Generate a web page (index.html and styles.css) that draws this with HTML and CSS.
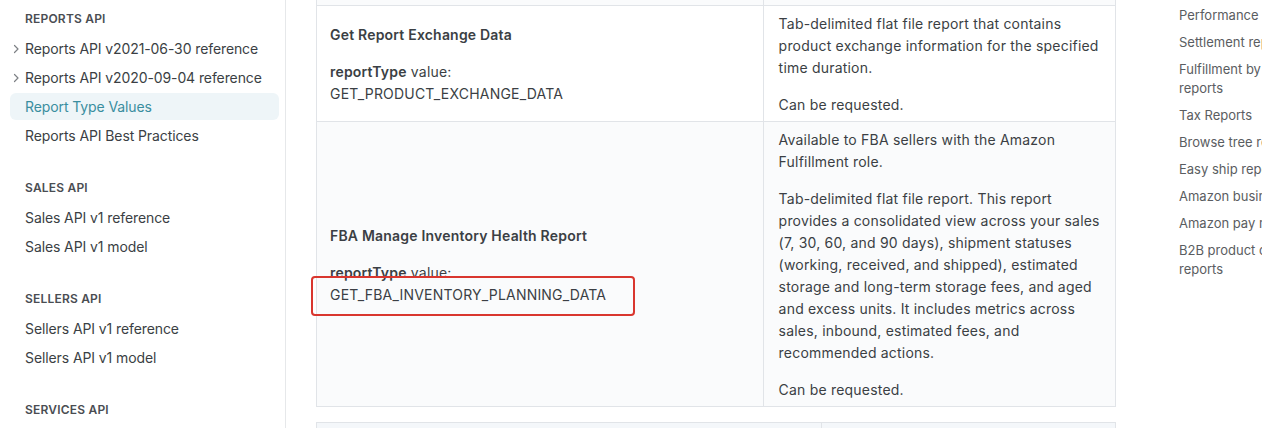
FILE: index.html
```html
<!DOCTYPE html>
<html lang="en">
<head>
<meta charset="utf-8">
<title>Report Type Values</title>
<link rel="stylesheet" href="styles.css">
</head>
<body>
<div class="page">
  <nav class="sidebar">
    <div class="section">
      <div class="section-title">REPORTS API</div>
      <a class="nav-item"><svg class="chev" viewBox="0 0 8 10" width="8" height="10"><path d="M2.5 1.5 L6 5 L2.5 8.5" fill="none" stroke="#7d8085" stroke-width="1.2" stroke-linecap="round" stroke-linejoin="round"/></svg>Reports API v2021-06-30 reference</a>
      <a class="nav-item"><svg class="chev" viewBox="0 0 8 10" width="8" height="10"><path d="M2.5 1.5 L6 5 L2.5 8.5" fill="none" stroke="#7d8085" stroke-width="1.2" stroke-linecap="round" stroke-linejoin="round"/></svg>Reports API v2020-09-04 reference</a>
      <a class="nav-item active">Report Type Values</a>
      <a class="nav-item">Reports API Best Practices</a>
    </div>
    <div class="section">
      <div class="section-title">SALES API</div>
      <a class="nav-item">Sales API v1 reference</a>
      <a class="nav-item">Sales API v1 model</a>
    </div>
    <div class="section">
      <div class="section-title">SELLERS API</div>
      <a class="nav-item">Sellers API v1 reference</a>
      <a class="nav-item">Sellers API v1 model</a>
    </div>
    <div class="section">
      <div class="section-title">SERVICES API</div>
    </div>
  </nav>

  <main class="content">
    <table class="report-table">
      <colgroup><col class="col-name"><col class="col-desc"></colgroup>
      <tr class="row-prev"><td></td><td></td></tr>
      <tr class="row-white">
        <td class="name-cell">
          <p><strong>Get Report Exchange Data</strong></p>
          <p><strong>reportType</strong> value:<br>GET_PRODUCT_EXCHANGE_DATA</p>
        </td>
        <td class="desc-cell">
          <p>Tab-delimited flat file report that contains product exchange information for the specified time duration.</p>
          <p>Can be requested.</p>
        </td>
      </tr>
      <tr class="row-gray">
        <td class="name-cell">
          <p><strong>FBA Manage Inventory Health Report</strong></p>
          <p><strong>reportType</strong> value:<br>GET_FBA_INVENTORY_PLANNING_DATA</p>
        </td>
        <td class="desc-cell">
          <p>Available to FBA sellers with the Amazon Fulfillment role.</p>
          <p>Tab-delimited flat file report. This report provides a consolidated view across your sales (7, 30, 60, and 90 days), shipment statuses (working, received, and shipped), estimated storage and long-term storage fees, and aged and excess units. It includes metrics across sales, inbound, estimated fees, and recommended actions.</p>
          <p>Can be requested.</p>
        </td>
      </tr>
    </table>

    <table class="next-table">
      <colgroup><col class="col-a"><col class="col-b"></colgroup>
      <tr><td></td><td></td></tr>
    </table>
  </main>

  <aside class="toc">
    <a class="toc-item">Performance reports</a>
    <a class="toc-item">Settlement reports</a>
    <a class="toc-item">Fulfillment by Amazon (FBA) reports</a>
    <a class="toc-item">Tax Reports</a>
    <a class="toc-item">Browse tree reports</a>
    <a class="toc-item">Easy ship reports</a>
    <a class="toc-item">Amazon business reports</a>
    <a class="toc-item">Amazon pay reports</a>
    <a class="toc-item">B2B product opportunities reports</a>
  </aside>

  <div class="highlight-box"></div>
</div>
</body>
</html>
```

FILE: styles.css
```css
html, body {
  margin: 0;
  padding: 0;
  height: 428px;
  overflow: hidden;
  background: #fff;
}

body {
  font-family: Inter, "Noto Sans", "Liberation Sans", sans-serif;
  color: #3b3f44;
  -webkit-font-smoothing: antialiased;
}

.page {
  position: relative;
  display: grid;
  grid-template-columns: 286px 893px 200px;
  width: 1379px;
  height: 428px;
}

/* Sidebar */
.sidebar {
  border-right: 1px solid #e6e8ea;
  padding: 11px 6px 0 10px;
}

.section + .section {
  margin-top: 31px;
}

.section-title {
  font-size: 12px;
  line-height: 16px;
  font-weight: 600;
  color: #4a4d52;
  letter-spacing: 0.2px;
  padding-left: 15px;
  margin-bottom: 8px;
}

.nav-item {
  display: flex;
  align-items: center;
  font-size: 14px;
  line-height: 19px;
  letter-spacing: -0.1px;
  padding: 4px 0 4px 15px;
  margin-bottom: 2px;
  color: #3b3f44;
  border-radius: 6px;
  white-space: nowrap;
}

.chev {
  margin-left: -13px;
  margin-right: 5px;
  flex: none;
}

.nav-item.active {
  background: #eef5f8;
  color: #3a8e9f;
}

/* Main content */
.content {
  padding-left: 30px;
}

.report-table,
.next-table {
  border-collapse: collapse;
  width: 800px;
  font-size: 14px;
  line-height: 22px;
  letter-spacing: 0.2px;
}

.col-name { width: 447px; }
.col-desc { width: 353px; }

.report-table td {
  border: 1px solid #e1e4e8;
  vertical-align: middle;
  padding: 7px 13px 5px 13px;
}

.report-table .desc-cell {
  padding-left: 15px;
}

.row-prev td {
  height: 5px;
  padding: 0;
  background: #fafbfc;
  border-top: none;
}

.row-white td { background: #fff; }
.row-gray td { background: #fafbfc; }

.report-table p {
  margin: 0 0 15px;
}

.report-table p:last-child {
  margin-bottom: 0;
}

.report-table strong {
  font-weight: 600;
}

.next-table {
  margin-top: 15px;
}

.col-a { width: 506px; }
.col-b { width: 294px; }

.next-table td {
  border: 1px solid #e1e4e8;
  background: #f4f7fa;
  height: 40px;
  padding: 0;
}

/* TOC */
.toc {
  display: flex;
  flex-direction: column;
  padding-top: 6px;
}

.toc-item {
  font-size: 13px;
  line-height: 19px;
  color: #5a5d61;
  margin-bottom: 8px;
}

/* Annotation overlay */
.highlight-box {
  position: absolute;
  left: 311px;
  top: 276px;
  width: 320px;
  height: 36px;
  border: 2px solid #d9362e;
  border-radius: 4px;
  pointer-events: none;
}
```
